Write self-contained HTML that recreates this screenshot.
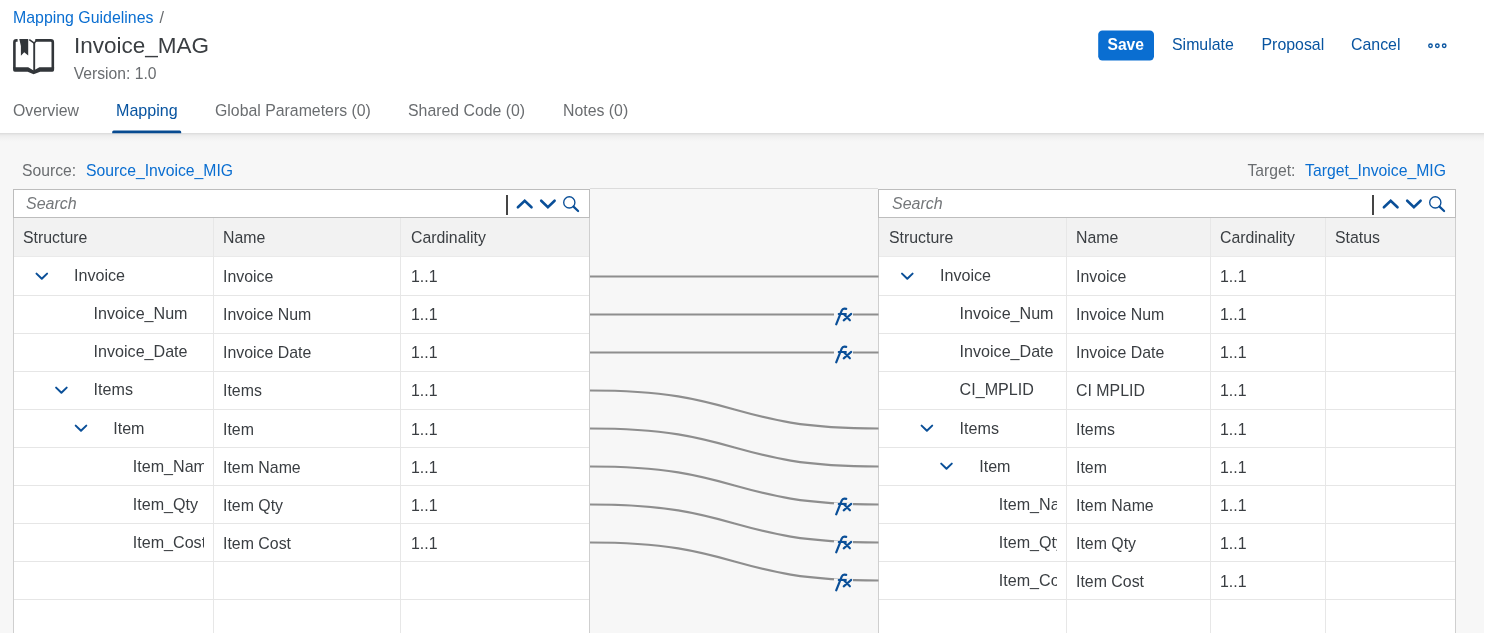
<!DOCTYPE html>
<html><head><meta charset="utf-8"><title>Invoice_MAG</title>
<style>
html,body{margin:0;padding:0;background:#fff;}
body{width:1489px;height:641px;overflow:hidden;position:relative;font-family:"Liberation Sans",sans-serif;}
#app{position:absolute;left:0;top:0;width:1484px;height:633px;background:#f7f7f7;overflow:hidden;will-change:transform;}
#hdr{position:absolute;left:0;top:0;width:1484px;height:133px;background:#fff;}
#shd{position:absolute;left:0;top:133px;width:1484px;height:9px;background:linear-gradient(to bottom,#dadada 0px,#e6e6e6 1.5px,#ececec 2.5px,#efefef 3.5px,#f2f2f2 5px,#f5f5f5 7px,#f7f7f7 9px);}
.t{position:absolute;white-space:nowrap;}
.abs{position:absolute;}
.tbl{position:absolute;background:#fff;overflow:hidden;}
.hl{position:absolute;height:1px;background:#e6e6e6;}
.vl{position:absolute;width:1px;background:#e7e7e7;}
svg{position:absolute;overflow:visible;}
</style></head><body>
<div id="app">
<div id="hdr"></div><div id="shd"></div>

<div class="t" style="left:13px;top:8px;font-size:15.9px;line-height:20px;color:#0a6ed1;">Mapping Guidelines</div>
<div class="t" style="left:159.4px;top:7px;font-size:16.2px;line-height:20px;color:#6a6d70;">/</div>
<svg style="left:13px;top:38px" width="42" height="37" viewBox="0 0 42 37">
<g fill="none" stroke="#32363a" stroke-linejoin="round">
<path d="M4.6 2.4 H3.4 Q1.4 2.4 1.4 4.4 V30.5" stroke-width="2.6"/>
<path d="M22.3 2.4 H37.8 Q39.8 2.4 39.8 4.4 V30.5" stroke-width="2.6"/>
<path d="M21.2 4.5 V33" stroke-width="1.9"/>
<path d="M16.3 1.6 L21.2 5.2 L23.2 2.6" stroke-width="1.5"/>
</g>
<path d="M0.1 29.2 H15.2 L20.6 32.4 L26.4 29.2 H41.1 V32 Q41.1 33.7 39.4 33.7 H27.2 L20.6 36.3 L14.6 33.7 H1.8 Q0.1 33.7 0.1 32 Z" fill="#32363a"/>
<path d="M6.3 1.1 H15.2 V17.6 L11.2 14.2 L7.9 17.7 V8 Z" fill="#32363a"/>
</svg>
<div class="t" style="left:73.9px;top:32px;font-size:22.5px;line-height:28px;color:#3a3e42;">Invoice_MAG</div>
<div class="t" style="left:73.7px;top:64px;font-size:15.7px;line-height:20px;color:#6a6d70;">Version: 1.0</div>
<div class="t" style="left:13px;top:101px;font-size:15.85px;line-height:20px;color:#6a6d70;">Overview</div>
<div class="t" style="left:116px;top:100px;font-size:16.1px;line-height:20px;color:#0854a0;">Mapping</div>
<div class="t" style="left:215px;top:101px;font-size:15.85px;line-height:20px;color:#6a6d70;">Global Parameters (0)</div>
<div class="t" style="left:408px;top:101px;font-size:15.85px;line-height:20px;color:#6a6d70;">Shared Code (0)</div>
<div class="t" style="left:563px;top:101px;font-size:15.85px;line-height:20px;color:#6a6d70;">Notes (0)</div>
<svg style="left:0;top:0" width="1" height="1"><path d="M112.2 133.2 V132 Q112.2 130.5 113.7 130.5 H179.7 Q181.2 130.5 181.2 132 V133.2 Z" fill="#074a90"/></svg>
<svg style="left:0;top:0" width="1" height="1"><rect x="1098.2" y="30.6" width="55.8" height="29.8" rx="4.2" fill="#0a6ed1"/></svg>
<div class="t" style="left:1107.5px;top:35px;font-size:15.6px;line-height:20px;color:#fff;font-weight:bold;">Save</div>
<div class="t" style="left:1172px;top:35px;font-size:15.9px;line-height:20px;color:#0854a0;">Simulate</div>
<div class="t" style="left:1261.5px;top:35px;font-size:15.9px;line-height:20px;color:#0854a0;">Proposal</div>
<div class="t" style="left:1351px;top:35px;font-size:15.9px;line-height:20px;color:#0854a0;">Cancel</div>
<svg style="left:1427px;top:41px" width="22" height="10" viewBox="0 0 22 10">
<circle cx="3.5" cy="4.75" r="1.75" fill="none" stroke="#0854a0" stroke-width="1.35"/>
<circle cx="10.35" cy="4.75" r="1.75" fill="none" stroke="#0854a0" stroke-width="1.35"/>
<circle cx="17.2" cy="4.75" r="1.75" fill="none" stroke="#0854a0" stroke-width="1.35"/>
</svg>
<div class="t" style="left:22px;top:161px;font-size:15.7px;line-height:20px;color:#6a6d70;">Source:</div>
<div class="t" style="left:86px;top:161px;font-size:15.75px;line-height:20px;color:#0a6ed1;">Source_Invoice_MIG</div>
<div class="t" style="left:1247.5px;top:161px;font-size:15.7px;line-height:20px;color:#6a6d70;">Target:</div>
<div class="t" style="left:1305px;top:161px;font-size:15.75px;line-height:20px;color:#0a6ed1;">Target_Invoice_MIG</div>
<div class="abs" style="left:590px;top:188px;width:288px;height:445px;background:#f7f7f7;border-top:1px solid #dcdcdc;box-sizing:border-box;"></div>
<div class="abs" style="left:13px;top:189px;width:577px;height:444px;background:#fff;"></div>
<div class="abs" style="left:13px;top:218px;width:577px;height:39px;background:#f2f2f2;"></div>
<div class="abs" style="left:13px;top:256px;width:577px;height:1px;background:#eaeaea;"></div>
<div class="abs" style="left:13px;top:189px;width:577px;height:29px;box-sizing:border-box;border:1px solid #bdbdbd;border-bottom:1.5px solid #bdbdbd;background:#fff;"></div>
<div class="vl" style="left:13px;top:218px;height:415px;background:#cfcfcf;"></div>
<div class="vl" style="left:589px;top:218px;height:415px;background:#cfcfcf;"></div>
<div class="vl" style="left:213px;top:218px;height:415px;"></div>
<div class="vl" style="left:400px;top:218px;height:415px;"></div>
<div class="hl" style="left:14px;top:295px;width:575px;"></div>
<div class="hl" style="left:14px;top:333px;width:575px;"></div>
<div class="hl" style="left:14px;top:371px;width:575px;"></div>
<div class="hl" style="left:14px;top:409px;width:575px;"></div>
<div class="hl" style="left:14px;top:447px;width:575px;"></div>
<div class="hl" style="left:14px;top:485px;width:575px;"></div>
<div class="hl" style="left:14px;top:523px;width:575px;"></div>
<div class="hl" style="left:14px;top:561px;width:575px;"></div>
<div class="hl" style="left:14px;top:599px;width:575px;"></div>
<div class="t" style="left:26px;top:194px;font-size:16px;line-height:20px;color:#74777a;font-style:italic;">Search</div>
<div class="abs" style="left:506px;top:195px;width:2px;height:19.5px;background:#454545;"></div>
<svg style="left:0;top:0" width="1" height="1">
<path d="M517.9 207.3 L524.7 200.9 L531.5 207.3" fill="none" stroke="#0a4f98" stroke-width="2.6" stroke-linecap="round" stroke-linejoin="miter"/>
<path d="M541.2 200.7 L547.9 207.1 L554.6 200.7" fill="none" stroke="#0a4f98" stroke-width="2.6" stroke-linecap="round" stroke-linejoin="miter"/>
<circle cx="569.3" cy="202.4" r="5.6" fill="none" stroke="#0a4f98" stroke-width="1.35"/>
<path d="M573.5 206.6 L578.1 211.0" fill="none" stroke="#0a4f98" stroke-width="2.2" stroke-linecap="round"/>
</svg>
<div class="t" style="left:23px;top:228px;font-size:15.85px;line-height:20px;color:#3a3e42;">Structure</div>
<div class="t" style="left:223px;top:228px;font-size:15.85px;line-height:20px;color:#3a3e42;">Name</div>
<div class="t" style="left:411px;top:228px;font-size:15.85px;line-height:20px;color:#3a3e42;">Cardinality</div>
<div class="t" style="left:74.0px;top:265px;font-size:16.1px;line-height:20px;color:#3a3e42;width:130.0px;overflow:hidden;">Invoice</div>
<svg style="left:0;top:0" width="1" height="1"><path d="M36.50 273.60 L41.80 278.80 L47.10 273.60" fill="none" stroke="#0a4f98" stroke-width="2.0" stroke-linecap="round" stroke-linejoin="round"/></svg>
<div class="t" style="left:223px;top:267px;font-size:15.9px;line-height:20px;color:#3a3e42;">Invoice</div>
<div class="t" style="left:411px;top:267px;font-size:15.9px;line-height:20px;color:#3a3e42;">1..1</div>
<div class="t" style="left:93.6px;top:303px;font-size:16.1px;line-height:20px;color:#3a3e42;width:110.4px;overflow:hidden;">Invoice_Num</div>
<div class="t" style="left:223px;top:305px;font-size:15.9px;line-height:20px;color:#3a3e42;">Invoice Num</div>
<div class="t" style="left:411px;top:305px;font-size:15.9px;line-height:20px;color:#3a3e42;">1..1</div>
<div class="t" style="left:93.6px;top:341px;font-size:16.1px;line-height:20px;color:#3a3e42;width:110.4px;overflow:hidden;">Invoice_Date</div>
<div class="t" style="left:223px;top:343px;font-size:15.9px;line-height:20px;color:#3a3e42;">Invoice Date</div>
<div class="t" style="left:411px;top:343px;font-size:15.9px;line-height:20px;color:#3a3e42;">1..1</div>
<div class="t" style="left:93.6px;top:379px;font-size:16.1px;line-height:20px;color:#3a3e42;width:110.4px;overflow:hidden;">Items</div>
<svg style="left:0;top:0" width="1" height="1"><path d="M56.10 387.60 L61.40 392.80 L66.70 387.60" fill="none" stroke="#0a4f98" stroke-width="2.0" stroke-linecap="round" stroke-linejoin="round"/></svg>
<div class="t" style="left:223px;top:381px;font-size:15.9px;line-height:20px;color:#3a3e42;">Items</div>
<div class="t" style="left:411px;top:381px;font-size:15.9px;line-height:20px;color:#3a3e42;">1..1</div>
<div class="t" style="left:113.2px;top:418px;font-size:16.1px;line-height:20px;color:#3a3e42;width:90.8px;overflow:hidden;">Item</div>
<svg style="left:0;top:0" width="1" height="1"><path d="M75.70 425.60 L81.00 430.80 L86.30 425.60" fill="none" stroke="#0a4f98" stroke-width="2.0" stroke-linecap="round" stroke-linejoin="round"/></svg>
<div class="t" style="left:223px;top:420px;font-size:15.9px;line-height:20px;color:#3a3e42;">Item</div>
<div class="t" style="left:411px;top:420px;font-size:15.9px;line-height:20px;color:#3a3e42;">1..1</div>
<div class="t" style="left:132.8px;top:456px;font-size:16.1px;line-height:20px;color:#3a3e42;width:71.19999999999999px;overflow:hidden;">Item_Name</div>
<div class="t" style="left:223px;top:458px;font-size:15.9px;line-height:20px;color:#3a3e42;">Item Name</div>
<div class="t" style="left:411px;top:458px;font-size:15.9px;line-height:20px;color:#3a3e42;">1..1</div>
<div class="t" style="left:132.8px;top:494px;font-size:16.1px;line-height:20px;color:#3a3e42;width:71.19999999999999px;overflow:hidden;">Item_Qty</div>
<div class="t" style="left:223px;top:496px;font-size:15.9px;line-height:20px;color:#3a3e42;">Item Qty</div>
<div class="t" style="left:411px;top:496px;font-size:15.9px;line-height:20px;color:#3a3e42;">1..1</div>
<div class="t" style="left:132.8px;top:532px;font-size:16.1px;line-height:20px;color:#3a3e42;width:71.19999999999999px;overflow:hidden;">Item_Cost</div>
<div class="t" style="left:223px;top:534px;font-size:15.9px;line-height:20px;color:#3a3e42;">Item Cost</div>
<div class="t" style="left:411px;top:534px;font-size:15.9px;line-height:20px;color:#3a3e42;">1..1</div>
<div class="abs" style="left:878px;top:189px;width:578px;height:444px;background:#fff;"></div>
<div class="abs" style="left:878px;top:218px;width:578px;height:39px;background:#f2f2f2;"></div>
<div class="abs" style="left:878px;top:256px;width:578px;height:1px;background:#eaeaea;"></div>
<div class="abs" style="left:878px;top:189px;width:578px;height:29px;box-sizing:border-box;border:1px solid #bdbdbd;border-bottom:1.5px solid #bdbdbd;background:#fff;"></div>
<div class="vl" style="left:878px;top:218px;height:415px;background:#cfcfcf;"></div>
<div class="vl" style="left:1455px;top:218px;height:415px;background:#cfcfcf;"></div>
<div class="vl" style="left:1066px;top:218px;height:415px;"></div>
<div class="vl" style="left:1210px;top:218px;height:415px;"></div>
<div class="vl" style="left:1325px;top:218px;height:415px;"></div>
<div class="hl" style="left:879px;top:295px;width:576px;"></div>
<div class="hl" style="left:879px;top:333px;width:576px;"></div>
<div class="hl" style="left:879px;top:371px;width:576px;"></div>
<div class="hl" style="left:879px;top:409px;width:576px;"></div>
<div class="hl" style="left:879px;top:447px;width:576px;"></div>
<div class="hl" style="left:879px;top:485px;width:576px;"></div>
<div class="hl" style="left:879px;top:523px;width:576px;"></div>
<div class="hl" style="left:879px;top:561px;width:576px;"></div>
<div class="hl" style="left:879px;top:599px;width:576px;"></div>
<div class="t" style="left:892px;top:194px;font-size:16px;line-height:20px;color:#74777a;font-style:italic;">Search</div>
<div class="abs" style="left:1372px;top:195px;width:2px;height:19.5px;background:#454545;"></div>
<svg style="left:0;top:0" width="1" height="1">
<path d="M1383.9 207.3 L1390.7 200.9 L1397.5 207.3" fill="none" stroke="#0a4f98" stroke-width="2.6" stroke-linecap="round" stroke-linejoin="miter"/>
<path d="M1407.2 200.7 L1413.9 207.1 L1420.6 200.7" fill="none" stroke="#0a4f98" stroke-width="2.6" stroke-linecap="round" stroke-linejoin="miter"/>
<circle cx="1435.3" cy="202.4" r="5.6" fill="none" stroke="#0a4f98" stroke-width="1.35"/>
<path d="M1439.5 206.6 L1444.1 211.0" fill="none" stroke="#0a4f98" stroke-width="2.2" stroke-linecap="round"/>
</svg>
<div class="t" style="left:889px;top:228px;font-size:15.85px;line-height:20px;color:#3a3e42;">Structure</div>
<div class="t" style="left:1076px;top:228px;font-size:15.85px;line-height:20px;color:#3a3e42;">Name</div>
<div class="t" style="left:1220px;top:228px;font-size:15.85px;line-height:20px;color:#3a3e42;">Cardinality</div>
<div class="t" style="left:1335px;top:228px;font-size:15.85px;line-height:20px;color:#3a3e42;">Status</div>
<div class="t" style="left:940.0px;top:265px;font-size:16.1px;line-height:20px;color:#3a3e42;width:117.0px;overflow:hidden;">Invoice</div>
<svg style="left:0;top:0" width="1" height="1"><path d="M902.00 273.60 L907.30 278.80 L912.60 273.60" fill="none" stroke="#0a4f98" stroke-width="2.0" stroke-linecap="round" stroke-linejoin="round"/></svg>
<div class="t" style="left:1076px;top:267px;font-size:15.9px;line-height:20px;color:#3a3e42;">Invoice</div>
<div class="t" style="left:1220px;top:267px;font-size:15.9px;line-height:20px;color:#3a3e42;">1..1</div>
<div class="t" style="left:959.6px;top:303px;font-size:16.1px;line-height:20px;color:#3a3e42;width:97.39999999999998px;overflow:hidden;">Invoice_Num</div>
<div class="t" style="left:1076px;top:305px;font-size:15.9px;line-height:20px;color:#3a3e42;">Invoice Num</div>
<div class="t" style="left:1220px;top:305px;font-size:15.9px;line-height:20px;color:#3a3e42;">1..1</div>
<div class="t" style="left:959.6px;top:341px;font-size:16.1px;line-height:20px;color:#3a3e42;width:97.39999999999998px;overflow:hidden;">Invoice_Date</div>
<div class="t" style="left:1076px;top:343px;font-size:15.9px;line-height:20px;color:#3a3e42;">Invoice Date</div>
<div class="t" style="left:1220px;top:343px;font-size:15.9px;line-height:20px;color:#3a3e42;">1..1</div>
<div class="t" style="left:959.6px;top:379px;font-size:16.1px;line-height:20px;color:#3a3e42;width:97.39999999999998px;overflow:hidden;">CI_MPLID</div>
<div class="t" style="left:1076px;top:381px;font-size:15.9px;line-height:20px;color:#3a3e42;">CI MPLID</div>
<div class="t" style="left:1220px;top:381px;font-size:15.9px;line-height:20px;color:#3a3e42;">1..1</div>
<div class="t" style="left:959.6px;top:418px;font-size:16.1px;line-height:20px;color:#3a3e42;width:97.39999999999998px;overflow:hidden;">Items</div>
<svg style="left:0;top:0" width="1" height="1"><path d="M921.60 425.60 L926.90 430.80 L932.20 425.60" fill="none" stroke="#0a4f98" stroke-width="2.0" stroke-linecap="round" stroke-linejoin="round"/></svg>
<div class="t" style="left:1076px;top:420px;font-size:15.9px;line-height:20px;color:#3a3e42;">Items</div>
<div class="t" style="left:1220px;top:420px;font-size:15.9px;line-height:20px;color:#3a3e42;">1..1</div>
<div class="t" style="left:979.2px;top:456px;font-size:16.1px;line-height:20px;color:#3a3e42;width:77.79999999999995px;overflow:hidden;">Item</div>
<svg style="left:0;top:0" width="1" height="1"><path d="M941.20 463.60 L946.50 468.80 L951.80 463.60" fill="none" stroke="#0a4f98" stroke-width="2.0" stroke-linecap="round" stroke-linejoin="round"/></svg>
<div class="t" style="left:1076px;top:458px;font-size:15.9px;line-height:20px;color:#3a3e42;">Item</div>
<div class="t" style="left:1220px;top:458px;font-size:15.9px;line-height:20px;color:#3a3e42;">1..1</div>
<div class="t" style="left:998.8px;top:494px;font-size:16.1px;line-height:20px;color:#3a3e42;width:58.200000000000045px;overflow:hidden;">Item_Name</div>
<div class="t" style="left:1076px;top:496px;font-size:15.9px;line-height:20px;color:#3a3e42;">Item Name</div>
<div class="t" style="left:1220px;top:496px;font-size:15.9px;line-height:20px;color:#3a3e42;">1..1</div>
<div class="t" style="left:998.8px;top:532px;font-size:16.1px;line-height:20px;color:#3a3e42;width:58.200000000000045px;overflow:hidden;">Item_Qty</div>
<div class="t" style="left:1076px;top:534px;font-size:15.9px;line-height:20px;color:#3a3e42;">Item Qty</div>
<div class="t" style="left:1220px;top:534px;font-size:15.9px;line-height:20px;color:#3a3e42;">1..1</div>
<div class="t" style="left:998.8px;top:570px;font-size:16.1px;line-height:20px;color:#3a3e42;width:58.200000000000045px;overflow:hidden;">Item_Cost</div>
<div class="t" style="left:1076px;top:572px;font-size:15.9px;line-height:20px;color:#3a3e42;">Item Cost</div>
<div class="t" style="left:1220px;top:572px;font-size:15.9px;line-height:20px;color:#3a3e42;">1..1</div>
<svg style="left:0;top:0" width="1" height="1"><g fill="none" stroke="#8e8e8e" stroke-width="2.2"><path d="M590 276.5 L878.5 276.5"/><path d="M590 314.5 L878.5 314.5"/><path d="M590 352.5 L878.5 352.5"/><path d="M590 390.5 C743 390.5 726 428.5 878.5 428.5"/><path d="M590 428.5 C743 428.5 726 466.5 878.5 466.5"/><path d="M590 466.5 C743 466.5 726 504.5 878.5 504.5"/><path d="M590 504.5 C743 504.5 726 542.5 878.5 542.5"/><path d="M590 542.5 C743 542.5 726 580.5 878.5 580.5"/></g></svg>
<svg style="left:835px;top:307.8px" width="18" height="18" viewBox="0 0 18 18">
<rect x="-1" y="4.5" width="19" height="4.5" fill="#f7f7f7"/>
<path d="M11.2 0.9 C9.4 0.3 7.6 0.5 6.8 2.4 L1.2 16.3" fill="none" stroke="#0a4f98" stroke-width="2.2" stroke-linecap="round"/>
<path d="M3.6 6 H11" fill="none" stroke="#0a4f98" stroke-width="1.8" stroke-linecap="round"/>
<path d="M8.6 6 L14.9 12.3 M16.2 5.9 L8.7 12.4" fill="none" stroke="#0a4f98" stroke-width="2.1" stroke-linecap="round"/>
</svg>
<svg style="left:835px;top:345.8px" width="18" height="18" viewBox="0 0 18 18">
<rect x="-1" y="4.5" width="19" height="4.5" fill="#f7f7f7"/>
<path d="M11.2 0.9 C9.4 0.3 7.6 0.5 6.8 2.4 L1.2 16.3" fill="none" stroke="#0a4f98" stroke-width="2.2" stroke-linecap="round"/>
<path d="M3.6 6 H11" fill="none" stroke="#0a4f98" stroke-width="1.8" stroke-linecap="round"/>
<path d="M8.6 6 L14.9 12.3 M16.2 5.9 L8.7 12.4" fill="none" stroke="#0a4f98" stroke-width="2.1" stroke-linecap="round"/>
</svg>
<svg style="left:835px;top:497.8px" width="18" height="18" viewBox="0 0 18 18">
<rect x="-1" y="4.5" width="19" height="4.5" fill="#f7f7f7"/>
<path d="M11.2 0.9 C9.4 0.3 7.6 0.5 6.8 2.4 L1.2 16.3" fill="none" stroke="#0a4f98" stroke-width="2.2" stroke-linecap="round"/>
<path d="M3.6 6 H11" fill="none" stroke="#0a4f98" stroke-width="1.8" stroke-linecap="round"/>
<path d="M8.6 6 L14.9 12.3 M16.2 5.9 L8.7 12.4" fill="none" stroke="#0a4f98" stroke-width="2.1" stroke-linecap="round"/>
</svg>
<svg style="left:835px;top:535.8px" width="18" height="18" viewBox="0 0 18 18">
<rect x="-1" y="4.5" width="19" height="4.5" fill="#f7f7f7"/>
<path d="M11.2 0.9 C9.4 0.3 7.6 0.5 6.8 2.4 L1.2 16.3" fill="none" stroke="#0a4f98" stroke-width="2.2" stroke-linecap="round"/>
<path d="M3.6 6 H11" fill="none" stroke="#0a4f98" stroke-width="1.8" stroke-linecap="round"/>
<path d="M8.6 6 L14.9 12.3 M16.2 5.9 L8.7 12.4" fill="none" stroke="#0a4f98" stroke-width="2.1" stroke-linecap="round"/>
</svg>
<svg style="left:835px;top:573.8px" width="18" height="18" viewBox="0 0 18 18">
<rect x="-1" y="4.5" width="19" height="4.5" fill="#f7f7f7"/>
<path d="M11.2 0.9 C9.4 0.3 7.6 0.5 6.8 2.4 L1.2 16.3" fill="none" stroke="#0a4f98" stroke-width="2.2" stroke-linecap="round"/>
<path d="M3.6 6 H11" fill="none" stroke="#0a4f98" stroke-width="1.8" stroke-linecap="round"/>
<path d="M8.6 6 L14.9 12.3 M16.2 5.9 L8.7 12.4" fill="none" stroke="#0a4f98" stroke-width="2.1" stroke-linecap="round"/>
</svg>
</div></body></html>
